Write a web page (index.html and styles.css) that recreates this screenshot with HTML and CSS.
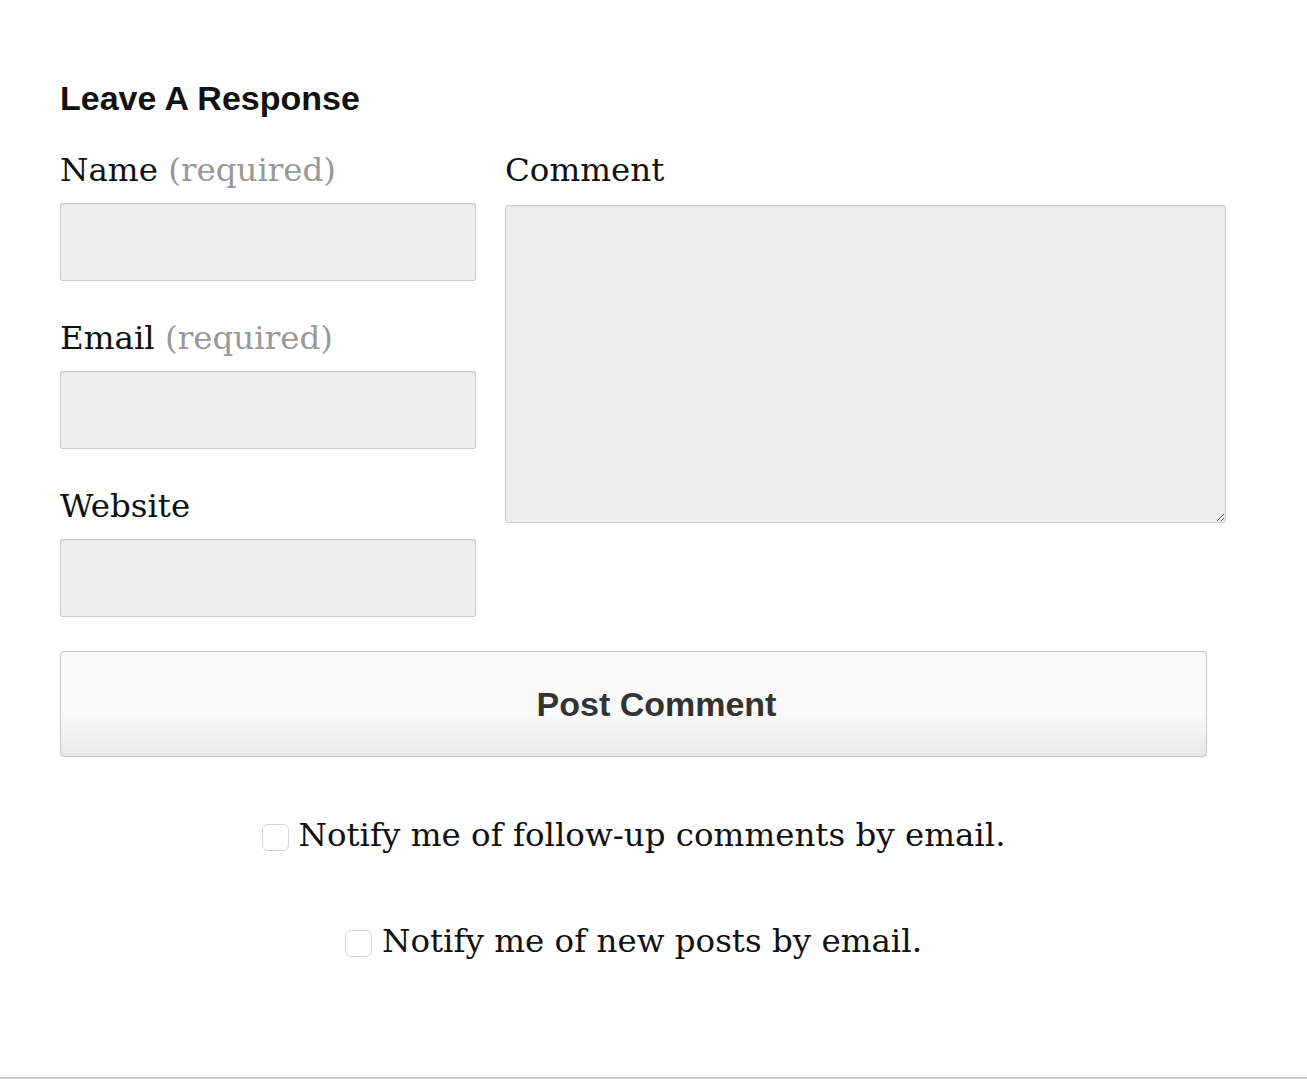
FILE: index.html
```html
<!DOCTYPE html>
<html>

<head>
    <title>Leave A Response</title>
    <link rel="stylesheet" href="styles.css">
</head>

<body>
    <div id="respond">
        <h3 class="reply-title">Leave A Response</h3>
        <form class="comment-form">
            <div class="fields">
                <div class="col-left">
                    <p class="field">
                        <label for="author">Name <span class="required">(required)</span></label>
                        <input id="author" type="text">
                    </p>
                    <p class="field">
                        <label for="email">Email <span class="required">(required)</span></label>
                        <input id="email" type="text">
                    </p>
                    <p class="field">
                        <label for="url">Website</label>
                        <input id="url" type="text">
                    </p>
                </div>
                <div class="col-right">
                    <label for="comment">Comment</label>
                    <textarea id="comment"></textarea>
                </div>
            </div>
            <button type="button" class="submit">Post Comment</button>
            <p class="subscribe">
                <input type="checkbox" id="subscribe_comments">
                <label for="subscribe_comments">Notify me of follow-up comments by email.</label>
            </p>
            <p class="subscribe">
                <input type="checkbox" id="subscribe_blog">
                <label for="subscribe_blog">Notify me of new posts by email.</label>
            </p>
        </form>
    </div>
</body>

</html>
```

FILE: styles.css
```css
body {
    margin: 0;
    background: #fff;
    color: #111;
    font-family: "DejaVu Serif", "Liberation Serif", serif;
}

#respond {
    box-sizing: border-box;
    height: 1079px;
    padding: 78px 60px 0;
    border-bottom: 2px solid #ccc;
}

.reply-title {
    margin: 0;
    font-family: "Liberation Sans", Arial, sans-serif;
    font-size: 34px;
    line-height: 40px;
    font-weight: bold;
    color: #111;
}

.comment-form {
    margin-top: 30px;
}

.fields {
    display: flex;
    gap: 29px;
    width: 1166px;
}

.col-left {
    flex: 0 0 416px;
}

.col-right {
    flex: 0 0 721px;
}

label {
    display: block;
    font-size: 32.5px;
    line-height: 44px;
}

.required {
    color: #999;
}

.field {
    margin: 0 0 35px;
}

.field:last-child {
    margin-bottom: 0;
}

.field input,
textarea {
    display: block;
    box-sizing: border-box;
    width: 100%;
    margin-top: 11px;
    background: #eee;
    border: 1px solid #ccc;
    border-radius: 2px;
    box-shadow: inset 0 1px 2px rgba(0, 0, 0, 0.06);
    font-family: inherit;
    font-size: 20px;
}

.field input {
    height: 78px;
}

textarea {
    height: 318px;
    margin-top: 13px;
    border-radius: 3px;
}

.submit {
    display: block;
    width: 1147px;
    height: 106px;
    margin-top: 34px;
    padding: 0 0 0 46px;
    border: 1px solid #c6c6c6;
    border-radius: 4px;
    background: linear-gradient(#fafafa 0, #fafafa 58%, #e9e9e9 100%);
    font-family: "Liberation Sans", Arial, sans-serif;
    font-size: 34px;
    font-weight: bold;
    color: #333;
}

.subscribe {
    display: flex;
    justify-content: center;
    align-items: center;
    gap: 10px;
    width: 1147px;
    margin: 56px 0 0;
}

.subscribe + .subscribe {
    margin-top: 62px;
}

.subscribe label {
    display: inline;
}

.subscribe input {
    appearance: none;
    width: 27px;
    height: 27px;
    margin: 5px 0 0;
    border: 1px solid #d4d4d4;
    border-radius: 6px;
    background: #fff;
}
```
